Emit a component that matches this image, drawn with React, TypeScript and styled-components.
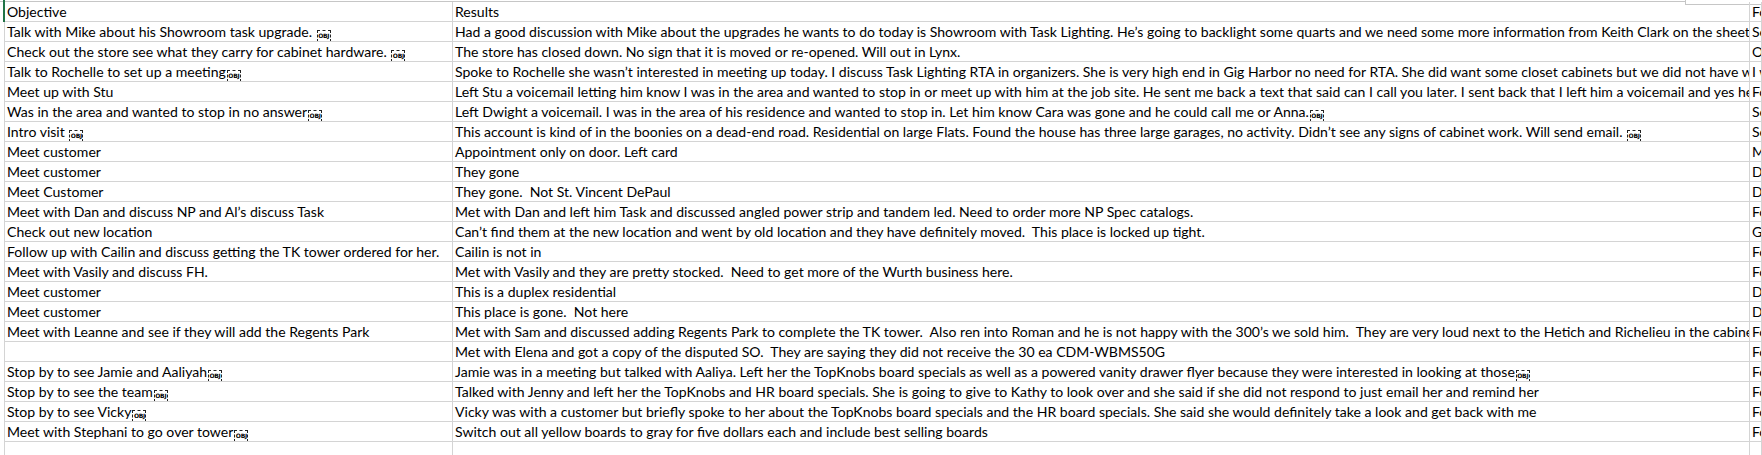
import React from "react";
import styled, { createGlobalStyle } from "styled-components";

const GlobalStyle = createGlobalStyle`
  html, body {
    margin: 0;
    padding: 0;
    background: #fff;
    overflow: hidden;
  }
  body {
    font-family: Lato, "Liberation Sans", sans-serif;
  }
`;

const Sheet = styled.div`
  width: 1762px;
  height: 455px;
  overflow: hidden;
  padding-top: 1px;
  box-sizing: border-box;
  position: relative;
`;

// thin frame line above the grid, with the little step near the right edge
const TopEdge = styled.div`
  height: 1px;
  background: #c6c6c6;
  margin-right: 77px;
  position: relative;

  &::after {
    content: "";
    position: absolute;
    left: 100%;
    top: -1px;
    width: 77px;
    height: 4px;
    border-left: 1px solid #c6c6c6;
    border-bottom: 1px solid #c6c6c6;
  }
`;

const Row = styled.div<{ $header?: boolean }>`
  display: grid;
  grid-template-columns: 448px 1297px 1fr;
  height: 20px;
  margin-left: 4px;
  border-left: 1px solid #d4d4d4;
  position: relative;

  &::before {
    content: "";
    display: ${({ $header }) => ($header ? "block" : "none")};
    position: absolute;
    left: -2px;
    top: -2px;
    width: 2px;
    height: 22px;
    background: #217346;
  }
`;

const Cell = styled.div`
  box-sizing: border-box;
  height: 20px;
  border-right: 1px solid #d4d4d4;
  border-bottom: 1px solid #d4d4d4;
  padding: 0 2px;
  font-size: 14.05px;
  line-height: 20px;
  color: #000;
  white-space: pre;
  overflow: hidden;
`;

const ObjMark = styled.span`
  display: inline-block;
  box-sizing: border-box;
  width: 14px;
  height: 12px;
  margin-left: 1px;
  border: 1px dashed #222;
  font-family: "DejaVu Sans", sans-serif;
  font-size: 6px;
  font-weight: bold;
  line-height: 10px;
  text-align: center;
  letter-spacing: -0.3px;
  vertical-align: -1px;
  color: #000;
`;

type Line = [string, string, string, boolean?, boolean?];
// [objective, results, next column, objective has OBJ mark, result has OBJ mark]

const rows: Line[] = [
  ["Talk with Mike about his Showroom task upgrade. ", "Had a good discussion with Mike about the upgrades he wants to do today is Showroom with Task Lighting. He\u2019s going to backlight some quarts and we need some more information from Keith Clark on the sheet samples he sent.", "Send Keith the info", true],
  ["Check out the store see what they carry for cabinet hardware. ", "The store has closed down. No sign that it is moved or re-opened. Will out in Lynx.", "Out of business", true],
  ["Talk to Rochelle to set up a meeting", "Spoke to Rochelle she wasn\u2019t interested in meeting up today. I discuss Task Lighting RTA in organizers. She is very high end in Gig Harbor no need for RTA. She did want some closet cabinets but we did not have what she needed.", "I will follow up", true],
  ["Meet up with Stu", "Left Stu a voicemail letting him know I was in the area and wanted to stop in or meet up with him at the job site. He sent me back a text that said can I call you later. I sent back that I left him a voicemail and yes he can call me.", "Follow up"],
  ["Was in the area and wanted to stop in no answer", "Left Dwight a voicemail. I was in the area of his residence and wanted to stop in. Let him know Cara was gone and he could call me or Anna.", "Send email", true, true],
  ["Intro visit ", "This account is kind of in the boonies on a dead-end road. Residential on large Flats. Found the house has three large garages, no activity. Didn\u2019t see any signs of cabinet work. Will send email. ", "Send email", true, true],
  ["Meet customer", "Appointment only on door. Left card", "Mail catalog"],
  ["Meet customer", "They gone", "Delete"],
  ["Meet Customer", "They gone.  Not St. Vincent DePaul", "Delete"],
  ["Meet with Dan and discuss NP and Al\u2019s discuss Task", "Met with Dan and left him Task and discussed angled power strip and tandem led. Need to order more NP Spec catalogs.", "Follow up"],
  ["Check out new location", "Can\u2019t find them at the new location and went by old location and they have definitely moved.  This place is locked up tight.", "Give up"],
  ["Follow up with Cailin and discuss getting the TK tower ordered for her.", "Cailin is not in", "Follow up"],
  ["Meet with Vasily and discuss FH.", "Met with Vasily and they are pretty stocked.  Need to get more of the Wurth business here.", "Follow up"],
  ["Meet customer", "This is a duplex residential", "Delete"],
  ["Meet customer", "This place is gone.  Not here", "Delete"],
  ["Meet with Leanne and see if they will add the Regents Park", "Met with Sam and discussed adding Regents Park to complete the TK tower.  Also ren into Roman and he is not happy with the 300\u2019s we sold him.  They are very loud next to the Hetich and Richelieu in the cabinets.", "Follow up"],
  ["", "Met with Elena and got a copy of the disputed SO.  They are saying they did not receive the 30 ea CDM-WBMS50G", "Follow up"],
  ["Stop by to see Jamie and Aaliyah", "Jamie was in a meeting but talked with Aaliya. Left her the TopKnobs board specials as well as a powered vanity drawer flyer because they were interested in looking at those", "Follow up", true, true],
  ["Stop by to see the team", "Talked with Jenny and left her the TopKnobs and HR board specials. She is going to give to Kathy to look over and she said if she did not respond to just email her and remind her", "Follow up", true],
  ["Stop by to see Vicky", "Vicky was with a customer but briefly spoke to her about the TopKnobs board specials and the HR board specials. She said she would definitely take a look and get back with me", "Follow up", true],
  ["Meet with Stephani to go over tower", "Switch out all yellow boards to gray for five dollars each and include best selling boards", "Follow up", true],
  ["", "", ""],
];

const Obj = () => <ObjMark>OBJ</ObjMark>;

export default function App() {
  return (
    <Sheet>
      <GlobalStyle />
      <TopEdge />
      <Row $header>
        <Cell>Objective</Cell>
        <Cell>Results</Cell>
        <Cell>Follow Up</Cell>
      </Row>
      {rows.map(([objective, result, next, objMark, resMark], i) => (
        <Row key={i}>
          <Cell>
            {objective}
            {objMark && <Obj />}
          </Cell>
          <Cell>
            {result}
            {resMark && <Obj />}
          </Cell>
          <Cell>{next}</Cell>
        </Row>
      ))}
    </Sheet>
  );
}
